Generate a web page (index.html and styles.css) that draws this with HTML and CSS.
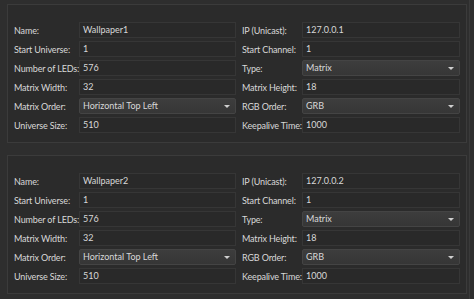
FILE: index.html
```html
<!DOCTYPE html>
<html>
<head>
<meta charset="utf-8">
<link rel="stylesheet" href="styles.css">
</head>
<body>
<div class="frame">
  <div class="panel">
    <div class="col left">
      <span class="lbl">Name:</span><div class="field">Wallpaper1</div>
      <span class="lbl">Start Universe:</span><div class="field">1</div>
      <span class="lbl">Number of LEDs:</span><div class="field">576</div>
      <span class="lbl">Matrix Width:</span><div class="field">32</div>
      <span class="lbl">Matrix Order:</span><div class="field combo">Horizontal Top Left<span class="arrow"></span></div>
      <span class="lbl">Universe Size:</span><div class="field">510</div>
    </div>
    <div class="col right">
      <span class="lbl">IP (Unicast):</span><div class="field">127.0.0.1</div>
      <span class="lbl">Start Channel:</span><div class="field">1</div>
      <span class="lbl">Type:</span><div class="field combo">Matrix<span class="arrow"></span></div>
      <span class="lbl">Matrix Height:</span><div class="field">18</div>
      <span class="lbl">RGB Order:</span><div class="field combo">GRB<span class="arrow"></span></div>
      <span class="lbl">Keepalive Time:</span><div class="field">1000</div>
    </div>
  </div>
  <div class="panel">
    <div class="col left">
      <span class="lbl">Name:</span><div class="field">Wallpaper2</div>
      <span class="lbl">Start Universe:</span><div class="field">1</div>
      <span class="lbl">Number of LEDs:</span><div class="field">576</div>
      <span class="lbl">Matrix Width:</span><div class="field">32</div>
      <span class="lbl">Matrix Order:</span><div class="field combo">Horizontal Top Left<span class="arrow"></span></div>
      <span class="lbl">Universe Size:</span><div class="field">510</div>
    </div>
    <div class="col right">
      <span class="lbl">IP (Unicast):</span><div class="field">127.0.0.2</div>
      <span class="lbl">Start Channel:</span><div class="field">1</div>
      <span class="lbl">Type:</span><div class="field combo">Matrix<span class="arrow"></span></div>
      <span class="lbl">Matrix Height:</span><div class="field">18</div>
      <span class="lbl">RGB Order:</span><div class="field combo">GRB<span class="arrow"></span></div>
      <span class="lbl">Keepalive Time:</span><div class="field">1000</div>
    </div>
  </div>
</div>
</body>
</html>
```
FILE: styles.css
```css
html, body {
  margin: 0;
  padding: 0;
  background: #2e2e2e;
  width: 474px;
  height: 299px;
  overflow: hidden;
  font-family: "Lato", "Liberation Sans", sans-serif;
  font-size: 9px;
  color: #d8d8d8;
}
.frame {
  width: 470px;
  height: 299px;
  box-sizing: border-box;
  border-right: 1px solid #3a3a3a;
  padding: 4px 0 0 7px;
  display: flex;
  flex-direction: column;
  gap: 12px;
}
.panel {
  width: 460px;
  box-sizing: border-box;
  border: 1px solid #3b3b3b;
  background: #2b2b2b;
  padding: 17px 5px 9px 6px;
  display: flex;
  gap: 6px;
}
.col {
  display: grid;
  row-gap: 3px;
  grid-auto-rows: 16px;
  align-items: center;
}
.left {
  grid-template-columns: 65px 157px;
}
.right {
  grid-template-columns: 60px 158px;
}
.lbl {
  white-space: nowrap;
  letter-spacing: -0.15px;
}
.field {
  position: relative;
  height: 16px;
  box-sizing: border-box;
  border: 1px solid #363636;
  background: #292929;
  padding-left: 3px;
  line-height: 14px;
  white-space: nowrap;
}
.combo {
  background: linear-gradient(#3d3d3d, #363636);
  border-color: #444444;
  border-radius: 2px;
}
.arrow {
  position: absolute;
  right: 5px;
  top: 6px;
  width: 0;
  height: 0;
  border-left: 3px solid transparent;
  border-right: 3px solid transparent;
  border-top: 3px solid #cfcfcf;
}
```
